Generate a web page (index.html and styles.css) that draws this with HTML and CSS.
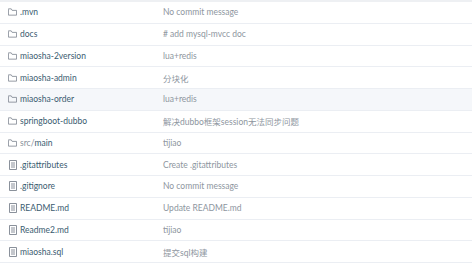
FILE: index.html
```html
<!DOCTYPE html>
<html>
<head>
<meta charset="utf-8">
<link rel="stylesheet" href="styles.css">
</head>
<body>
<div class="table">
  <div class="top"></div>
  <div class="row"><div class="name"><svg class="ic" viewBox="0 0 10 8"><path d="M0.5 1.2 V7.5 H9.5 V2.2 H4.6 L3.6 0.5 H0.5 Z" /></svg><span class="link">.mvn</span></div><div class="msg">No commit message</div></div>
  <div class="row"><div class="name"><svg class="ic" viewBox="0 0 10 8"><path d="M0.5 1.2 V7.5 H9.5 V2.2 H4.6 L3.6 0.5 H0.5 Z" /></svg><span class="link">docs</span></div><div class="msg"># add mysql-mvcc doc</div></div>
  <div class="row"><div class="name"><svg class="ic" viewBox="0 0 10 8"><path d="M0.5 1.2 V7.5 H9.5 V2.2 H4.6 L3.6 0.5 H0.5 Z" /></svg><span class="link">miaosha-2version</span></div><div class="msg">lua+redis</div></div>
  <div class="row"><div class="name"><svg class="ic" viewBox="0 0 10 8"><path d="M0.5 1.2 V7.5 H9.5 V2.2 H4.6 L3.6 0.5 H0.5 Z" /></svg><span class="link">miaosha-admin</span></div><div class="msg">分块化</div></div>
  <div class="row hover"><div class="name"><svg class="ic" viewBox="0 0 10 8"><path d="M0.5 1.2 V7.5 H9.5 V2.2 H4.6 L3.6 0.5 H0.5 Z" /></svg><span class="link">miaosha-order</span></div><div class="msg">lua+redis</div></div>
  <div class="row"><div class="name"><svg class="ic" viewBox="0 0 10 8"><path d="M0.5 1.2 V7.5 H9.5 V2.2 H4.6 L3.6 0.5 H0.5 Z" /></svg><span class="link">springboot-dubbo</span></div><div class="msg">解决dubbo框架session无法同步问题</div></div>
  <div class="row"><div class="name"><svg class="ic" viewBox="0 0 10 8"><path d="M0.5 1.2 V7.5 H9.5 V2.2 H4.6 L3.6 0.5 H0.5 Z" /></svg><span class="dim">src/</span><span class="link">main</span></div><div class="msg">tijiao</div></div>
  <div class="row"><div class="name"><svg class="ic file" viewBox="0 0 8 10"><path d="M0.5 0.5 H7.5 V9.5 H0.5 Z M2 3 H6 M2 5 H6 M2 7 H6" /></svg><span class="link">.gitattributes</span></div><div class="msg">Create .gitattributes</div></div>
  <div class="row"><div class="name"><svg class="ic file" viewBox="0 0 8 10"><path d="M0.5 0.5 H7.5 V9.5 H0.5 Z M2 3 H6 M2 5 H6 M2 7 H6" /></svg><span class="link">.gitignore</span></div><div class="msg">No commit message</div></div>
  <div class="row"><div class="name"><svg class="ic file" viewBox="0 0 8 10"><path d="M0.5 0.5 H7.5 V9.5 H0.5 Z M2 3 H6 M2 5 H6 M2 7 H6" /></svg><span class="link">README.md</span></div><div class="msg">Update README.md</div></div>
  <div class="row"><div class="name"><svg class="ic file" viewBox="0 0 8 10"><path d="M0.5 0.5 H7.5 V9.5 H0.5 Z M2 3 H6 M2 5 H6 M2 7 H6" /></svg><span class="link">Readme2.md</span></div><div class="msg">tijiao</div></div>
  <div class="row"><div class="name"><svg class="ic file" viewBox="0 0 8 10"><path d="M0.5 0.5 H7.5 V9.5 H0.5 Z M2 3 H6 M2 5 H6 M2 7 H6" /></svg><span class="link">miaosha.sql</span></div><div class="msg">提交sql构建</div></div>
</div>
</body>
</html>
```
FILE: styles.css
```css
html, body {
  margin: 0;
  padding: 0;
  background: #ffffff;
}
body {
  font-family: Lato, "Noto Sans CJK SC", sans-serif;
  font-size: 8.5px;
}
.table {
  width: 472px;
}
.top {
  height: 2px;
  background: #eef0f3;
}
.row {
  display: flex;
  align-items: center;
  height: 20.75px;
  border-bottom: 1px solid #ebeef3;
}
.row.hover {
  background: #f5f7fa;
}
.name {
  width: 163px;
  padding-left: 8px;
  box-sizing: border-box;
  display: flex;
  align-items: center;
}
.ic {
  width: 9px;
  height: 8px;
  margin-right: 3px;
  fill: none;
  stroke: #7d8590;
  stroke-width: 0.9;
}
.ic.file {
  width: 8px;
  height: 10px;
  margin-left: 1px;
  margin-right: 3px;
}
.link {
  color: #3a5b70;
}
.dim {
  color: #8a929c;
}
.msg {
  color: #8e96a0;
}
```
